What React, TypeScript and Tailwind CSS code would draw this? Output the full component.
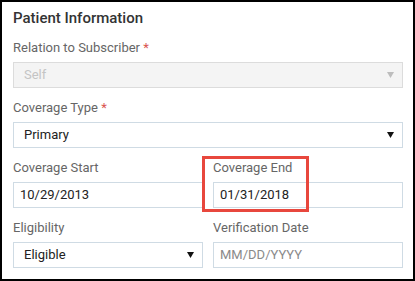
import React from "react";

function Caret({ color }: { color: string }) {
  return (
    <svg width="7" height="6" viewBox="0 0 7 6" className="shrink-0">
      <path d="M0 0 H7 L3.5 6 Z" fill={color} />
    </svg>
  );
}

function Label({ text, required }: { text: string; required?: boolean }) {
  return (
    <div className="text-[13px] leading-[16px] text-[#666] mb-[6px] whitespace-nowrap">
      {text}
      {required && <span className="text-[#d9534f]"> *</span>}
    </div>
  );
}

function Select({ value, disabled }: { value: string; disabled?: boolean }) {
  return (
    <div
      className={
        disabled
          ? "h-[26px] border border-[#dcdcdc] bg-[#f4f4f4] flex items-center pl-[10px] pr-[8px] text-[13px] text-[#c4c4c4]"
          : "h-[26px] border border-[#cfdbe4] bg-white flex items-center pl-[10px] pr-[8px] text-[13px] text-[#222]"
      }
    >
      <span className="flex-1">{value}</span>
      <Caret color={disabled ? "#bdbdbd" : "#111"} />
    </div>
  );
}

function Input({ value, placeholder }: { value?: string; placeholder?: string }) {
  return (
    <div className="h-[26px] border border-[#cfdbe4] bg-white flex items-center pl-[6px] text-[13px]">
      {value ? (
        <span className="text-[#222]">{value}</span>
      ) : (
        <span className="text-[#8a8a8a]">{placeholder}</span>
      )}
    </div>
  );
}

export default function App() {
  return (
    <div
      className="relative w-[415px] h-[281px] border-2 border-black bg-white pl-[11px] pr-[10px] pt-[6px] overflow-hidden"
      style={{ fontFamily: "Roboto, 'Liberation Sans', sans-serif" }}
    >
      <div className="text-[15px] leading-[20px] font-medium text-[#333] mb-[12px]">
        Patient Information
      </div>
      <div className="mb-[12px]">
        <Label text="Relation to Subscriber" required />
        <Select value="Self" disabled />
      </div>
      <div className="mb-[12px]">
        <Label text="Coverage Type" required />
        <Select value="Primary" />
      </div>
      <div className="grid grid-cols-2 gap-x-[10px] gap-y-[12px]">
        <div>
          <Label text="Coverage Start" />
          <Input value="10/29/2013" />
        </div>
        <div>
          <Label text="Coverage End" />
          <Input value="01/31/2018" />
        </div>
        <div>
          <Label text="Eligibility" />
          <Select value="Eligible" />
        </div>
        <div>
          <Label text="Verification Date" />
          <Input placeholder="MM/DD/YYYY" />
        </div>
      </div>
      <div className="absolute left-[200px] top-[154px] w-[107px] h-[56px] border-[3px] border-[#e8473d] pointer-events-none" />
    </div>
  );
}
